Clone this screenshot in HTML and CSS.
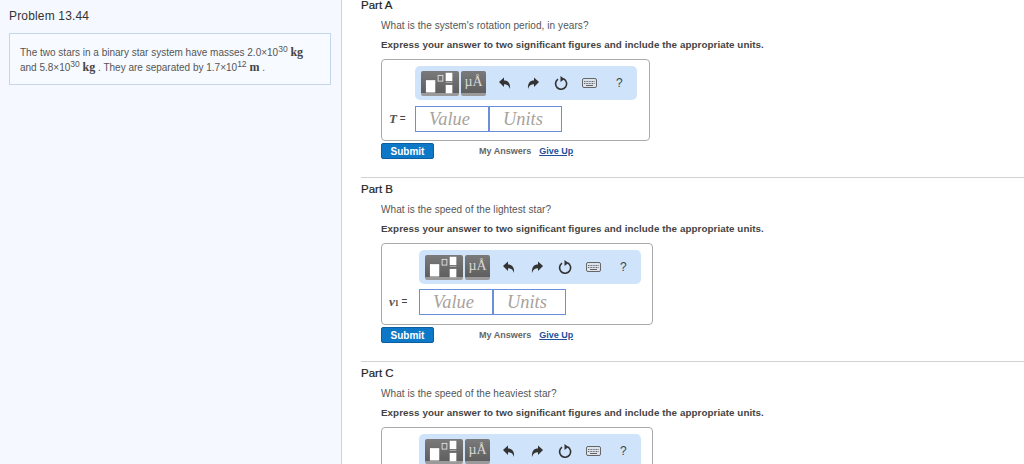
FILE: index.html
```html
<!DOCTYPE html>
<html lang="en">
<head>
<meta charset="utf-8">
<title>Problem 13.44</title>
<link rel="stylesheet" href="styles.css">
</head>
<body>
<div class="page">
  <aside class="side">
    <h1 class="prob-title">Problem 13.44</h1>
    <div class="prob-box">The two stars in a binary star system have masses 2.0×10<sup>30</sup> <b class="unit">kg</b><br>and 5.8×10<sup>30</sup> <b class="unit">kg</b> . They are separated by 1.7×10<sup>12</sup> <b class="unit">m</b> .</div>
  </aside>
  <main class="main">
    <section class="part first">
      <h2 class="part-title">Part A</h2>
      <p class="q">What is the system's rotation period, in years?</p>
      <p class="expr">Express your answer to two significant figures and include the appropriate units.</p>
      <div class="box">
        <div class="toolbar">
          <div class="tool tool-tpl"><svg class="tpl" width="30" height="22" viewBox="0 0 30 22"><rect x="0" y="8" width="10" height="13" fill="#fff"/><rect x="13" y="3" width="5" height="6" fill="none" stroke="#ddd" stroke-width="1"/><rect x="21" y="0" width="7" height="9" fill="#fff"/><rect x="21" y="10" width="7" height="1" fill="#aaa"/><rect x="21" y="13" width="7" height="9" fill="#fff"/></svg></div>
          <div class="tool tool-mu">µÅ</div>
          <svg class="ic ic-undo" width="14" height="14" viewBox="0 0 14 14"><path d="M1 6 6 1.500V4.500C10 4.500 12.500 7 12 13 11 9.500 9 8.200 6 8.200V11Z" fill="#333"/></svg>
          <svg class="ic ic-redo" width="14" height="14" viewBox="0 0 14 14"><path d="M13 6 8 1.500V4.500C4 4.500 1.500 7 2 13 3 9.500 5 8.200 8 8.200V11Z" fill="#333"/></svg>
          <svg class="ic ic-reload" width="14" height="14" viewBox="0 0 14 14"><path d="M4 3.200A5.500 5.500 0 1 0 9.500 2.800" fill="none" stroke="#333" stroke-width="1.600"/><path d="M6.500 0 10.500 3 6.500 6Z" fill="#333"/></svg>
          <svg class="ic ic-kbd" width="15" height="10" viewBox="0 0 15 10"><rect x="0.500" y="0.500" width="14" height="9" rx="1.500" fill="#dbe4ee" stroke="#666"/><path d="M2 3.500H13M2 5.500H13" stroke="#666" stroke-dasharray="1 .6"/><path d="M4 7.500H11" stroke="#666"/></svg>
          <span class="help">?</span>
        </div>
        <div class="label"><i class="var">T</i> =</div>
        <div class="inputs"><span class="field">Value</span><span class="field">Units</span></div>
      </div>
      <div class="actions">
        <button class="submit">Submit</button>
        <span class="mine">My Answers</span>
        <a class="giveup" href="#">Give Up</a>
      </div>
    </section>
    <section class="part">
      <h2 class="part-title">Part B</h2>
      <p class="q">What is the speed of the lightest star?</p>
      <p class="expr">Express your answer to two significant figures and include the appropriate units.</p>
      <div class="box wide">
        <div class="toolbar">
          <div class="tool tool-tpl"><svg class="tpl" width="30" height="22" viewBox="0 0 30 22"><rect x="0" y="8" width="10" height="13" fill="#fff"/><rect x="13" y="3" width="5" height="6" fill="none" stroke="#ddd" stroke-width="1"/><rect x="21" y="0" width="7" height="9" fill="#fff"/><rect x="21" y="10" width="7" height="1" fill="#aaa"/><rect x="21" y="13" width="7" height="9" fill="#fff"/></svg></div>
          <div class="tool tool-mu">µÅ</div>
          <svg class="ic ic-undo" width="14" height="14" viewBox="0 0 14 14"><path d="M1 6 6 1.500V4.500C10 4.500 12.500 7 12 13 11 9.500 9 8.200 6 8.200V11Z" fill="#333"/></svg>
          <svg class="ic ic-redo" width="14" height="14" viewBox="0 0 14 14"><path d="M13 6 8 1.500V4.500C4 4.500 1.500 7 2 13 3 9.500 5 8.200 8 8.200V11Z" fill="#333"/></svg>
          <svg class="ic ic-reload" width="14" height="14" viewBox="0 0 14 14"><path d="M4 3.200A5.500 5.500 0 1 0 9.500 2.800" fill="none" stroke="#333" stroke-width="1.600"/><path d="M6.500 0 10.500 3 6.500 6Z" fill="#333"/></svg>
          <svg class="ic ic-kbd" width="15" height="10" viewBox="0 0 15 10"><rect x="0.500" y="0.500" width="14" height="9" rx="1.500" fill="#dbe4ee" stroke="#666"/><path d="M2 3.500H13M2 5.500H13" stroke="#666" stroke-dasharray="1 .6"/><path d="M4 7.500H11" stroke="#666"/></svg>
          <span class="help">?</span>
        </div>
        <div class="label"><i class="var">v</i><sub class="sub">1</sub> =</div>
        <div class="inputs"><span class="field">Value</span><span class="field">Units</span></div>
      </div>
      <div class="actions">
        <button class="submit">Submit</button>
        <span class="mine">My Answers</span>
        <a class="giveup" href="#">Give Up</a>
      </div>
    </section>
    <section class="part">
      <h2 class="part-title">Part C</h2>
      <p class="q">What is the speed of the heaviest star?</p>
      <p class="expr">Express your answer to two significant figures and include the appropriate units.</p>
      <div class="box wide">
        <div class="toolbar">
          <div class="tool tool-tpl"><svg class="tpl" width="30" height="22" viewBox="0 0 30 22"><rect x="0" y="8" width="10" height="13" fill="#fff"/><rect x="13" y="3" width="5" height="6" fill="none" stroke="#ddd" stroke-width="1"/><rect x="21" y="0" width="7" height="9" fill="#fff"/><rect x="21" y="10" width="7" height="1" fill="#aaa"/><rect x="21" y="13" width="7" height="9" fill="#fff"/></svg></div>
          <div class="tool tool-mu">µÅ</div>
          <svg class="ic ic-undo" width="14" height="14" viewBox="0 0 14 14"><path d="M1 6 6 1.500V4.500C10 4.500 12.500 7 12 13 11 9.500 9 8.200 6 8.200V11Z" fill="#333"/></svg>
          <svg class="ic ic-redo" width="14" height="14" viewBox="0 0 14 14"><path d="M13 6 8 1.500V4.500C4 4.500 1.500 7 2 13 3 9.500 5 8.200 8 8.200V11Z" fill="#333"/></svg>
          <svg class="ic ic-reload" width="14" height="14" viewBox="0 0 14 14"><path d="M4 3.200A5.500 5.500 0 1 0 9.500 2.800" fill="none" stroke="#333" stroke-width="1.600"/><path d="M6.500 0 10.500 3 6.500 6Z" fill="#333"/></svg>
          <svg class="ic ic-kbd" width="15" height="10" viewBox="0 0 15 10"><rect x="0.500" y="0.500" width="14" height="9" rx="1.500" fill="#dbe4ee" stroke="#666"/><path d="M2 3.500H13M2 5.500H13" stroke="#666" stroke-dasharray="1 .6"/><path d="M4 7.500H11" stroke="#666"/></svg>
          <span class="help">?</span>
        </div>
      </div>
    </section>
  </main>
</div>
</body>
</html>
```
FILE: styles.css
```css
* { box-sizing: border-box; }
html, body { margin: 0; height: 100%; overflow: hidden; background: #fff; }
body { font-family: "Liberation Sans", Arial, sans-serif; color: #333; }
.page { display: flex; height: 464px; overflow: hidden; }
.side { flex: 0 0 342px; background: #f5f9ff; border-right: 1px solid #c9d4e2; padding: 9px 10px 0 9px; }
.prob-title { margin: 0 0 10px; font-size: 12px; font-weight: 400; line-height: 14px; letter-spacing: .16px; color: #333; }
.prob-box { background: #f7faff; border: 1px solid #c5d6e8; padding: 11px 10px 0; height: 52px; font-size: 10px; line-height: 15px; color: #555; white-space: nowrap; }
.prob-box sup { font-size: 8.500px; line-height: 0; vertical-align: 4px; }
.unit { font-family: "Liberation Serif", serif; font-size: 12px; color: #444; }
.main { flex: 1; min-width: 0; padding-left: 19px; }
.part { height: 184px; border-top: 1px solid #d2d2d2; padding-top: 5px; }
.part.first { margin-top: -7px; border-top-color: transparent; }
.part-title { margin: 0; font-size: 11.500px; font-weight: 400; line-height: 13px; color: #222; -webkit-text-stroke: .2px #222; }
.q { margin: 7px 0 0 20px; font-size: 10px; line-height: 13px; letter-spacing: .07px; color: #555; }
.expr { margin: 6px 0 0 20px; font-size: 9.800px; font-weight: 700; line-height: 13px; letter-spacing: .07px; color: #444; }
.box { margin: 8px 0 0 20px; width: 269px; height: 82px; border: 1px solid #aaa; border-radius: 4px; padding: 6px 0 0 7px; display: grid; grid-template-columns: 26px auto; grid-template-rows: 34px auto; row-gap: 6px; align-content: start; }
.box.wide { width: 272px; grid-template-columns: 30px auto; row-gap: 5px; }
.toolbar { grid-column: 2; grid-row: 1; width: 222px; height: 34px; background: #cfe3fb; border-radius: 5px; display: flex; align-items: center; padding-left: 6px; }
.tool { height: 25px; border-radius: 2px; background: linear-gradient(#7a7a7a, #5f5f5f 88%, #9a9a9a 88%); display: flex; align-items: center; justify-content: center; }
.tool-tpl { width: 38px; }
.tool-mu { width: 25px; margin-left: 2px; font-family: "Liberation Serif", serif; font-size: 14px; color: #d8d8d8; padding-bottom: 2px; }
.tpl { display: block; transform: scale(.95); }
.ic { flex: none; display: block; }
.ic-undo { margin-left: 12px; }
.ic-redo { margin-left: 14px; }
.ic-reload { margin-left: 14px; }
.ic-kbd { margin-left: 14px; }
.help { margin-left: 19px; font-size: 12px; color: #444; }
.label { grid-column: 1; grid-row: 2; display: flex; align-items: center; font-size: 10px; color: #444; white-space: pre; height: 25px; }
.var { font-family: "Liberation Serif", serif; font-size: 13px; font-weight: 700; color: #555; }
.sub { font-family: "Liberation Serif", serif; font-size: 8px; line-height: 0; margin-top: 5px; font-weight: 700; }
.inputs { grid-column: 2; grid-row: 2; display: flex; }
.field { width: 74px; height: 26px; border: 1px solid #6b8fd8; background: #fff; font-family: "Liberation Serif", serif; font-style: italic; font-size: 18.400px; line-height: 24px; padding-left: 13px; color: #a8a29a; }
.field + .field { width: 73px; }
.actions { margin: 2px 0 0 20px; display: flex; align-items: center; height: 16px; }
.submit { width: 53px; height: 16px; padding: 0; border: 1px solid #0b5f9f; border-radius: 2px; background: #0e78c8; color: #fff; font: 700 10px "Liberation Sans", Arial, sans-serif; }
.mine { margin-left: 45px; font-size: 9px; font-weight: 700; color: #666; }
.giveup { margin-left: 8px; font-size: 9px; font-weight: 700; color: #1d4f9c; }
```
